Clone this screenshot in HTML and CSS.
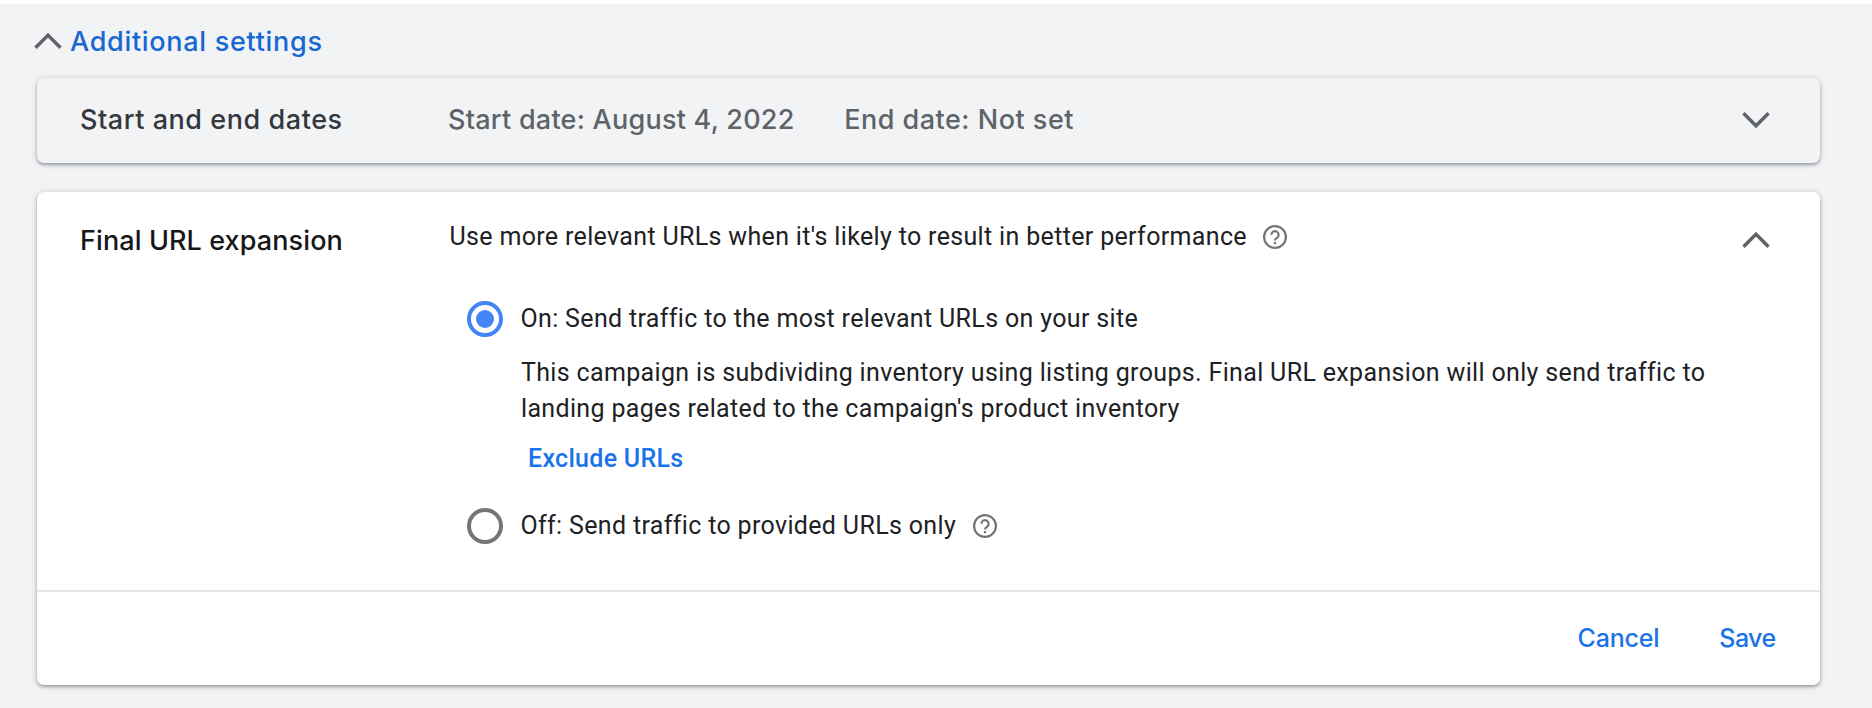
FILE: index.html
```html
<!DOCTYPE html>
<html lang="en">
<head>
  <meta charset="UTF-8" />
  <meta name="viewport" content="width=device-width, initial-scale=1" />
  <title>Additional settings</title>
  <link rel="stylesheet" href="styles.css">
</head>
<body>

  <main class="settings">
    <!-- SECTION TOGGLE -->
    <div class="section-header">
      <svg class="chevron" viewBox="0 0 28 18" aria-hidden="true"><path d="M1.5 15.8 14 3.2 26.5 15.8" /></svg>
      <h1>Additional settings</h1>
    </div>

    <!-- START AND END DATES -->
    <section class="card card-collapsed">
      <h2 class="card-title dates-title">Start and end dates</h2>
      <div class="summary">
        <span class="start-date">Start date: August 4, 2022</span>
        <span class="end-date">End date: Not set</span>
      </div>
      <svg class="chevron" viewBox="0 0 28 18" aria-hidden="true"><path d="M1.5 2.2 14 14.8 26.5 2.2" /></svg>
    </section>

    <!-- FINAL URL EXPANSION -->
    <section class="card">
      <div class="card-body">
        <h2 class="card-title">Final URL expansion</h2>
        <div class="content">
          <p class="description">
            Use more relevant URLs when it's likely to result in better performance
            <svg class="help" viewBox="0 0 24 24" aria-hidden="true"><circle cx="12" cy="12" r="10.9" /><path d="M8.4 9.7a3.6 3.6 0 1 1 5.9 2.8C13 13.5 12 14 12 15.6" /><path d="M12 17v2.2" /></svg>
          </p>

          <div class="option">
            <span class="radio checked" role="radio" aria-checked="true"></span>
            <span class="option-label">On: Send traffic to the most relevant URLs on your site</span>
          </div>
          <p class="option-note">This campaign is subdividing inventory using listing groups. Final URL expansion will only send traffic to landing pages related to the campaign's product inventory</p>
          <a class="exclude" href="#">Exclude URLs</a>

          <div class="option">
            <span class="radio" role="radio" aria-checked="false"></span>
            <span class="option-label">Off: Send traffic to provided URLs only</span>
            <svg class="help" viewBox="0 0 24 24" aria-hidden="true"><circle cx="12" cy="12" r="10.9" /><path d="M8.4 9.7a3.6 3.6 0 1 1 5.9 2.8C13 13.5 12 14 12 15.6" /><path d="M12 17v2.2" /></svg>
          </div>
        </div>
        <svg class="chevron" viewBox="0 0 28 18" aria-hidden="true"><path d="M1.5 15.8 14 3.2 26.5 15.8" /></svg>
      </div>

      <div class="actions">
        <button class="cancel" type="button">Cancel</button>
        <button class="save" type="button">Save</button>
      </div>
    </section>
  </main>

</body>
</html>
```

FILE: styles.css
```css
/* Reset and base */
* {
  box-sizing: border-box;
  margin: 0;
  padding: 0;
}

body {
  font-family: Roboto, "Liberation Sans", sans-serif;
  font-size: 25px;
  line-height: 36px;
  letter-spacing: 0.34px;
  color: #202124;
  background-color: #f1f3f5;
  border-top: 4px solid #fff;
  min-height: 100vh;
}

.settings {
  padding: 0 52.5px 23px 37px;
}

/* Section toggle */
.section-header {
  display: flex;
  align-items: center;
  height: 73.5px;
  margin-left: -3px;
}

.section-header h1 {
  margin-left: 8px;
  padding-top: 2px;
  font: 500 27px/36px Inter, "Open Sans", sans-serif;
  letter-spacing: 0.7px;
  color: #1967d2;
}

.chevron {
  flex: none;
  width: 28px;
  height: 18px;
  fill: none;
  stroke: #5f6368;
  stroke-width: 3.4;
}

/* Cards */
.card {
  border-radius: 7px;
  background-color: #fff;
  box-shadow: 0 2px 3px rgba(60, 64, 67, 0.34), 0 1px 6px rgba(60, 64, 67, 0.24);
}

.card-collapsed {
  display: flex;
  align-items: center;
  height: 85.5px;
  margin-bottom: 29px;
  padding: 0 50px 0 43px;
  background-color: #f1f3f5;
}

.card-title {
  flex: none;
  width: 368px;
  padding-top: 1px;
  font: 500 27px/36px Inter, "Open Sans", sans-serif;
  letter-spacing: 0.1px;
  color: #161719;
}

.dates-title {
  padding-top: 0;
  letter-spacing: 0.55px;
  color: #34383c;
}

.summary {
  display: flex;
  flex: 1;
  gap: 49.5px;
  font: 500 27px/36px Inter, "Open Sans", sans-serif;
  color: #5f6368;
}

.start-date {
  letter-spacing: 0.25px;
}

.end-date {
  letter-spacing: 0.5px;
}

/* Expanded card */
.card-body {
  display: flex;
  align-items: flex-start;
  height: 397.5px;
  padding: 30px 50px 0 43px;
}

.card-body .content {
  flex: 1;
  margin-top: -3px;
}

.card-body > .chevron {
  margin-top: 9px;
}

.description {
  display: flex;
  align-items: center;
  gap: 16.5px;
  padding-left: 1.5px;
}

.help {
  flex: none;
  width: 24px;
  height: 24px;
  fill: none;
  stroke: #757575;
  stroke-width: 2.2;
}

/* Radio options */
.option {
  display: flex;
  align-items: center;
  margin-top: 46px;
  padding-left: 19px;
}

.radio {
  flex: none;
  width: 36px;
  height: 36px;
  margin-right: 17.5px;
  border: 4px solid #757575;
  border-radius: 50%;
}

.radio.checked {
  display: grid;
  place-items: center;
  border-color: #4285f4;
}

.radio.checked::after {
  content: '';
  width: 18px;
  height: 18px;
  border-radius: 50%;
  background: #4285f4;
}

.option .help {
  margin-left: 17px;
}

.option-note {
  width: 1190px;
  margin: 18px 0 14px 73px;
}

.exclude {
  display: block;
  width: max-content;
  margin-left: 80px;
  font-weight: 500;
  letter-spacing: 0.3px;
  color: #1a73e8;
  text-decoration: none;
}

.exclude + .option {
  margin-top: 31px;
}

/* Footer buttons */
.actions {
  display: flex;
  justify-content: flex-end;
  gap: 60px;
  height: 95.5px;
  padding: 0 44px 1px 0;
  border-top: 2px solid #e4e5e6;
}

.actions button {
  border: 0;
  background: none;
  font: 500 25px/36px Inter, "Open Sans", sans-serif;
  letter-spacing: -0.2px;
  color: #1a73e8;
  cursor: pointer;
}

.actions .save {
  letter-spacing: -0.6px;
}
```
